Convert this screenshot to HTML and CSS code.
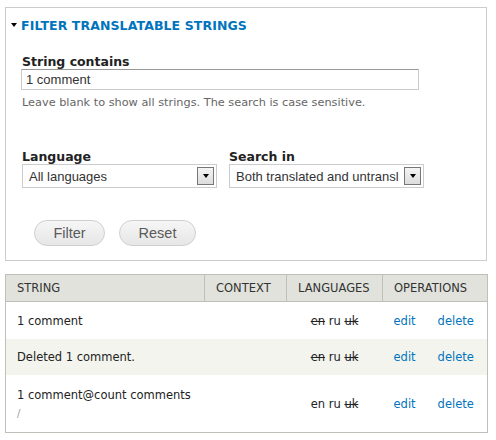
FILE: index.html
```html
<!DOCTYPE html>
<html>
<head>
<meta charset="utf-8">
<link rel="stylesheet" href="styles.css">
</head>
<body>
<div class="page">
  <div class="filter">
    <div class="filter-title"><span class="caret"></span><span class="title-text">Filter translatable strings</span></div>
    <div class="filter-body">
      <div class="field">
        <label class="label">String contains</label>
        <div class="textbox">1 comment</div>
        <div class="desc">Leave blank to show all strings. The search is case sensitive.</div>
      </div>
      <div class="selects">
        <div class="field">
          <label class="label">Language</label>
          <div class="select"><span class="select-text">All languages</span><span class="arrow"><span class="tri"></span></span></div>
        </div>
        <div class="field">
          <label class="label">Search in</label>
          <div class="select"><span class="select-text">Both translated and untransl</span><span class="arrow"><span class="tri"></span></span></div>
        </div>
      </div>
      <div class="actions">
        <button class="btn btn-filter">Filter</button>
        <button class="btn btn-reset">Reset</button>
      </div>
    </div>
  </div>

  <table class="strings">
    <colgroup><col class="c1"><col class="c2"><col class="c3"><col class="c4"></colgroup>
    <thead>
      <tr><th>String</th><th>Context</th><th>Languages</th><th>Operations</th></tr>
    </thead>
    <tbody>
      <tr class="r1">
        <td>1 comment</td><td></td>
        <td class="langs"><s>en</s> ru <s>uk</s></td>
        <td><div class="ops"><a href="#">edit</a><a href="#">delete</a></div></td>
      </tr>
      <tr class="r2">
        <td>Deleted 1 comment.</td><td></td>
        <td class="langs"><s>en</s> ru <s>uk</s></td>
        <td><div class="ops"><a href="#">edit</a><a href="#">delete</a></div></td>
      </tr>
      <tr class="r3">
        <td>1 comment@count comments<div class="sep">/</div></td><td></td>
        <td class="langs">en ru <s>uk</s></td>
        <td><div class="ops"><a href="#">edit</a><a href="#">delete</a></div></td>
      </tr>
    </tbody>
  </table>
</div>
</body>
</html>
```

FILE: styles.css
```css
html, body {
  margin: 0;
  padding: 0;
  background: #fff;
}
.page {
  padding: 7px 0 0 5px;
  font-family: "DejaVu Sans", Verdana, sans-serif;
  color: #333;
}
.filter {
  width: 480px;
  height: 252px;
  border: 1px solid #ccc;
}
.filter-title {
  display: flex;
  align-items: center;
  padding: 9px 0 0 5px;
  height: 16px;
}
.caret {
  width: 0;
  height: 0;
  border-left: 3.5px solid transparent;
  border-right: 3.5px solid transparent;
  border-top: 4px solid #000;
  margin-right: 4px;
}
.title-text {
  font-weight: bold;
  font-size: 12.5px;
  text-transform: uppercase;
  color: #0074bd;
  letter-spacing: 0.1px;
}
.filter-body {
  padding: 21px 0 0 16px;
}
.label {
  display: block;
  font-weight: bold;
  font-size: 12.5px;
  color: #222;
  line-height: 15px;
}
.textbox {
  margin-top: 0;
  margin-left: -1px;
  width: 388px;
  height: 19px;
  border: 1px solid #ccc;
  border-top-color: #999;
  font-family: "Liberation Sans", Arial, sans-serif;
  font-size: 13px;
  line-height: 19px;
  padding: 0 4px;
  color: #333;
}
.desc {
  margin-top: 5px;
  font-size: 11.3px;
  color: #666;
  line-height: 15px;
}
.selects {
  display: flex;
  gap: 12px;
  margin-top: 39px;
}
.select {
  margin-top: 0;
  width: 193px;
  height: 22px;
  border: 1px solid #ccc;
  display: flex;
  align-items: center;
  font-family: "Liberation Sans", Arial, sans-serif;
  font-size: 13px;
  color: #333;
}
.select-text {
  flex: 1;
  overflow: hidden;
  white-space: nowrap;
  padding-left: 6px;
  margin-right: 2px;
}
.arrow {
  width: 15px;
  height: 16px;
  margin-right: 2px;
  border: 1px solid #777;
  background: linear-gradient(#f4f4f4, #dcdcdc);
  display: flex;
  align-items: center;
  justify-content: center;
}
.tri {
  width: 0;
  height: 0;
  border-left: 3.5px solid transparent;
  border-right: 3.5px solid transparent;
  border-top: 4px solid #000;
}
.actions {
  display: flex;
  gap: 14px;
  margin-top: 32px;
  padding-left: 12px;
}
.btn {
  height: 26px;
  border: 1px solid #cfcfcf;
  border-radius: 13px;
  background: linear-gradient(#f6f6f6, #e6e6e6);
  font-family: "Liberation Sans", Arial, sans-serif;
  font-size: 14.5px;
  color: #5a5a5a;
  padding: 0;
}
.btn-filter { width: 71px; }
.btn-reset { width: 77px; }
.strings {
  margin-top: 13px;
  width: 482px;
  border-collapse: collapse;
  table-layout: fixed;
  border: 1px solid #bfbfba;
  font-size: 11.5px;
}
.c1 { width: 199px; }
.c2 { width: 82px; }
.c3 { width: 96px; }
.c4 { width: 105px; }
.strings th {
  background: #e1e2dc;
  text-transform: uppercase;
  font-weight: normal;
  text-align: left;
  height: 26px;
  padding: 0 0 0 11px;
  border-left: 1px solid #bfbfba;
  border-bottom: 1px solid #bfbfba;
  color: #333;
}
.strings td {
  padding: 0 0 0 11px;
  color: #222;
}
.r1 td { height: 37px; }
.r2 td { height: 36px; background: #f3f4ee; }
.r3 td { height: 57px; }
.langs {
  text-align: center;
  padding-left: 0 !important;
}
.ops {
  display: flex;
  gap: 22px;
}
.ops a {
  color: #0074bd;
  text-decoration: none;
}
.sep {
  color: #999;
  font-size: 10px;
  margin-top: 6px;
}
```
